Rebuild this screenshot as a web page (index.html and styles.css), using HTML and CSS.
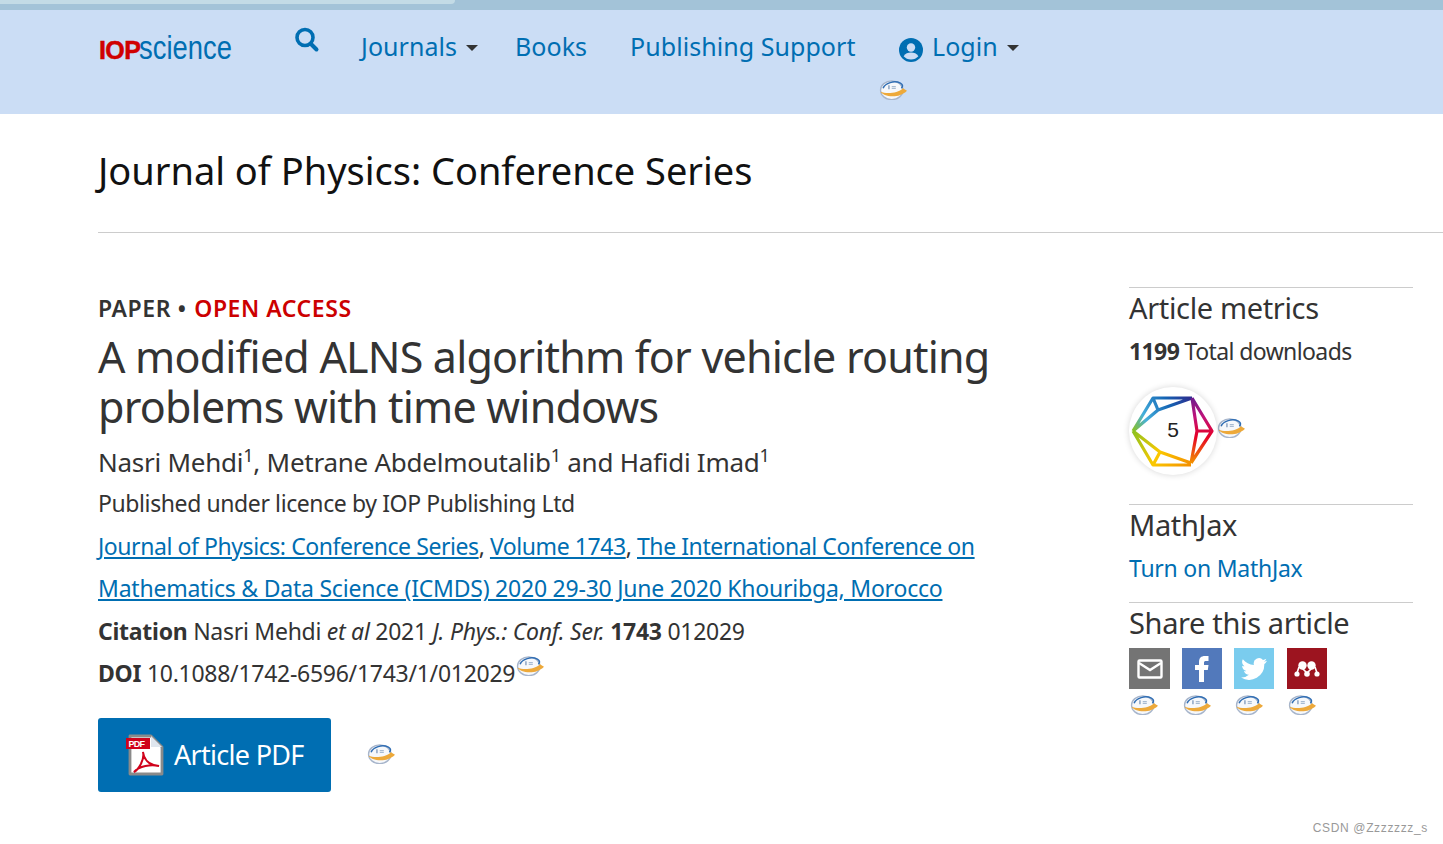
FILE: index.html
```html
<!DOCTYPE html>
<html lang="en">
<head>
    <meta charset="UTF-8">
    <meta name="viewport" content="width=device-width, initial-scale=1.0">
    <title>A modified ALNS algorithm for vehicle routing problems with time windows</title>
    <link rel="stylesheet" href="styles.css">
</head>
<body>
    <svg class="defs" width="0" height="0" aria-hidden="true">
        <symbol id="orb" viewBox="0 0 27.500 19.500">
            <ellipse cx="12.500" cy="10" rx="11" ry="9.200" fill="#f6f8fb" stroke="#a7b5cb" stroke-width="1.300"/>
            <path d="M4 8C6 3 15 0 21 3c2 1 3 3 1 5" fill="none" stroke="#2f6db3" stroke-width="1.500"/>
            <path d="M1.500 11.500c6 2.500 17 1.500 22-3.500l4 2.500c-4 4-9 5.500-14 5.500-6 0-10.500-2-12-4.500z" fill="#eda93a"/>
            <path d="M9 5h1.500v4H9zM12.500 6h4v1h-4zM12.500 8h4v.8h-4z" fill="#8fa6c4"/>
        </symbol>
    </svg>

    <div class="browser-strip"><div class="browser-tab"></div></div>

    <header class="site-header">
        <a class="logo" href="#"><span class="logo-iop">IOP</span><span class="logo-science">science</span></a>
        <nav class="main-nav">
            <a class="search-link" href="#" aria-label="Search">
                <svg width="26" height="26" viewBox="0 0 26 26"><circle cx="11" cy="10.500" r="8" fill="none" stroke="#006eb2" stroke-width="3.600"/><path d="M16.500 16.500l6 6" stroke="#006eb2" stroke-width="4" stroke-linecap="round"/></svg>
            </a>
            <a class="nav-link nav-drop" href="#">Journals<span class="caret"></span></a>
            <a class="nav-link" href="#">Books</a>
            <a class="nav-link" href="#">Publishing Support</a>
            <div class="login-wrap">
                <a class="nav-link" href="#">
                    <svg class="user-icon" width="24" height="24" viewBox="0 0 24 24"><circle cx="12" cy="12" r="12" fill="#006eb2"/><circle cx="12" cy="9.500" r="4.200" fill="#cbddf5"/><path d="M4.600 18.200c1.600-2.800 4.400-3.700 7.400-3.700s5.800.9 7.400 3.700c-1.800 2-4.400 3.300-7.400 3.300s-5.600-1.300-7.400-3.300z" fill="#cbddf5"/></svg>
                    Login<span class="caret"></span>
                </a>
                <svg class="orb orb-login"><use href="#orb"/></svg>
            </div>
        </nav>
    </header>

    <div class="journal-bar">
        <h2 class="journal-title">Journal of Physics: Conference Series</h2>
    </div>

    <main class="content">
        <article class="article">
            <div class="wd-label">PAPER <span class="dot">&bull;</span> <span class="open-access">OPEN ACCESS</span></div>
            <h1 class="article-title">A modified ALNS algorithm for vehicle routing problems with time windows</h1>
            <p class="authors">Nasri Mehdi<sup>1</sup>, Metrane Abdelmoutalib<sup>1</sup> and Hafidi Imad<sup>1</sup></p>
            <p class="meta">Published under licence by IOP Publishing Ltd</p>
            <p class="meta breadcrumbs"><a href="#">Journal of Physics: Conference Series</a>, <a href="#">Volume 1743</a>, <a href="#">The International Conference on</a></p>
            <p class="meta breadcrumbs-wide"><a href="#">Mathematics &amp; Data Science (ICMDS) 2020 29-30 June 2020 Khouribga, Morocco</a></p>
            <p class="meta citation"><b>Citation</b> Nasri Mehdi <i>et al</i> 2021 <i>J. Phys.: Conf. Ser.</i> <b>1743</b> 012029</p>
            <p class="meta citation"><b>DOI</b> 10.1088/1742-6596/1743/1/012029<svg class="orb orb-doi"><use href="#orb"/></svg></p>
            <div class="actions">
                <a class="btn-pdf" href="#">
                    <svg class="pdf-icon" width="38" height="42" viewBox="0 0 38 42">
                        <path d="M4 2h21l11 11v27H4z" fill="#fff" stroke="#8a8a8a" stroke-width="2.800" stroke-linejoin="round"/>
                        <path d="M25 2v11h11z" fill="#dfe6ee"/>
                        <rect x="0" y="4" width="24" height="11" fill="#d0021b"/>
                        <path d="M17 18c1 8 6 13 16 14-8-2-20 0-25 6 4-2 11-12 9-20z" fill="none" stroke="#d0021b" stroke-width="2"/>
                        <text x="2.500" y="12.800" class="pdf-text">PDF</text>
                    </svg>
                    Article PDF
                </a>
                <svg class="orb orb-pdf"><use href="#orb"/></svg>
            </div>
        </article>

        <aside class="sidebar">
            <section class="side-block metrics">
                <h3>Article metrics</h3>
                <p><b>1199</b> Total downloads</p>
                <div class="dimensions">
                    <div class="badge">
                        <svg width="88" height="88" viewBox="0 0 88 88">
                            <defs>
                                <linearGradient id="dim-a" gradientUnits="userSpaceOnUse" x1="4" y1="44" x2="63" y2="10">
                                    <stop offset="0" stop-color="#8dc21f"/>
                                    <stop offset="0.25" stop-color="#45b0dc"/>
                                    <stop offset="0.65" stop-color="#1464b4"/>
                                    <stop offset="1" stop-color="#2e2a8c"/>
                                </linearGradient>
                                <linearGradient id="dim-b" gradientUnits="userSpaceOnUse" x1="63" y1="10" x2="62" y2="76">
                                    <stop offset="0" stop-color="#6a1b8f"/>
                                    <stop offset="0.3" stop-color="#c0127a"/>
                                    <stop offset="0.6" stop-color="#e60026"/>
                                    <stop offset="1" stop-color="#f39000"/>
                                </linearGradient>
                                <linearGradient id="dim-c" gradientUnits="userSpaceOnUse" x1="4" y1="44" x2="62" y2="76">
                                    <stop offset="0" stop-color="#8dc21f"/>
                                    <stop offset="0.5" stop-color="#fbc800"/>
                                    <stop offset="1" stop-color="#f39000"/>
                                </linearGradient>
                            </defs>
                            <g fill="none" stroke-linejoin="round" stroke-width="3.200">
                                <path stroke="url(#dim-a)" d="M4 44L24 11H63M4 44L29 23 63 11M24 11L29 23"/>
                                <path stroke="url(#dim-b)" d="M63 11L83 44 62 76M63 11L68 44 62 76M68 44H83"/>
                                <path stroke="url(#dim-c)" d="M4 44L24 78H62M4 44L31 65 62 76M31 65L24 78"/>
                            </g>
                        </svg>
                        <span class="badge-num">5</span>
                    </div>
                    <svg class="orb orb-badge"><use href="#orb"/></svg>
                </div>
            </section>
            <section class="side-block mathjax">
                <h3>MathJax</h3>
                <p><a href="#">Turn on MathJax</a></p>
            </section>
            <section class="side-block share">
                <h3>Share this article</h3>
                <div class="share-row">
                    <div class="share-item">
                        <a class="share-btn mail" href="#" aria-label="Email"><svg width="26" height="20" viewBox="0 0 26 20"><rect x="1.500" y="1.500" width="23" height="17" rx="1" fill="none" stroke="#fff" stroke-width="2.400"/><path d="M2 4l11 7 11-7" fill="none" stroke="#fff" stroke-width="2.400"/></svg></a>
                        <svg class="orb"><use href="#orb"/></svg>
                    </div>
                    <div class="share-item">
                        <a class="share-btn fb" href="#" aria-label="Facebook"><svg width="14" height="26" viewBox="0 0 14 26"><path d="M4 26V14H0V9h4V6c0-4 2-6 6-6h3.500v5H11c-1.500 0-2 .6-2 2v2h4.500l-.7 5H9v12z" fill="#fff"/></svg></a>
                        <svg class="orb"><use href="#orb"/></svg>
                    </div>
                    <div class="share-item">
                        <a class="share-btn tw" href="#" aria-label="Twitter"><svg width="26" height="22" viewBox="0 0 24 20"><path d="M24 2.400c-.9.400-1.800.7-2.800.8 1-.6 1.800-1.600 2.200-2.700-1 .6-2 1-3.100 1.200A4.900 4.900 0 0 0 11.900 6.200C7.800 6 4.200 4 1.700.9.400 3.100 1 6 3.200 7.500c-.8 0-1.600-.2-2.200-.6 0 2.400 1.700 4.400 3.900 4.900-.7.200-1.500.2-2.200.1.600 2 2.400 3.400 4.600 3.400A9.900 9.900 0 0 1 0 17.800 14 14 0 0 0 21.500 5.400c1-.7 1.800-1.600 2.500-3z" fill="#fff"/></svg></a>
                        <svg class="orb"><use href="#orb"/></svg>
                    </div>
                    <div class="share-item">
                        <a class="share-btn mendeley" href="#" aria-label="Mendeley"><svg width="26" height="16" viewBox="0 0 26 16"><circle cx="3" cy="13" r="2.600" fill="#fff"/><circle cx="23" cy="13" r="2.600" fill="#fff"/><circle cx="13" cy="13" r="2.800" fill="#fff"/><circle cx="8.500" cy="4.500" r="4.200" fill="#fff"/><circle cx="17.500" cy="4.500" r="4.200" fill="#fff"/><path d="M5 6L3 12M21 6l2 6M8 7l5 5 5-5" fill="none" stroke="#fff" stroke-width="1.600"/></svg></a>
                        <svg class="orb"><use href="#orb"/></svg>
                    </div>
                </div>
            </section>
        </aside>
    </main>

    <div class="watermark">CSDN @Zzzzzzz_s</div>
</body>
</html>
```

FILE: styles.css
```css
body {
    margin: 0;
    font-family: "Noto Sans", "Open Sans", Arial, sans-serif;
    color: #333;
    background-color: #fff;
    height: 844px;
    overflow: hidden;
    position: relative;
}

a { color: #006eb2; text-decoration: none; }

.defs { position: absolute; }

.browser-strip {
    height: 10px;
    background-color: #a3c3d8;
}

.browser-tab {
    width: 455px;
    height: 4px;
    background-color: #c3dbe6;
    border-bottom-right-radius: 8px;
}

.site-header {
    height: 104px;
    background-color: #cbddf5;
    padding-left: 98px;
    display: flex;
    align-items: flex-start;
}

.logo {
    margin-top: 20px;
    width: 196px;
    display: flex;
    align-items: baseline;
    font-family: "Liberation Sans", Arial, sans-serif;
    font-size: 33px;
    line-height: 36px;
}

.logo-iop {
    color: #d00000;
    font-weight: bold;
    font-size: 25px;
    letter-spacing: -0.6px;
    margin-left: 1px;
    margin-right: -1px;
    -webkit-text-stroke: 0.5px #d00000;
}

.logo-science {
    color: #006eb2;
    transform: scaleX(0.83);
    transform-origin: left;
}

.main-nav {
    display: flex;
    align-items: flex-start;
    gap: 43px;
    font-size: 25px;
    line-height: 34px;
    margin-top: 19px;
}

.search-link { margin-right: -2px; margin-top: -3px; }

.nav-link { white-space: nowrap; letter-spacing: 0.05px; display: block; }

.nav-drop { margin-right: -6px; }

.caret {
    display: inline-block;
    margin-left: 9px;
    vertical-align: 5px;
    border-top: 6px solid #333;
    border-left: 6px solid transparent;
    border-right: 6px solid transparent;
}

.user-icon { vertical-align: -6px; margin-left: 1px; margin-right: 2px; }

.login-wrap { position: relative; }

.orb { width: 28px; height: 20px; display: block; }

.orb-login { position: absolute; left: -19px; top: 51px; }

.journal-bar {
    margin-left: 98px;
    height: 118px;
    border-bottom: 1px solid #ccc;
}

.journal-title {
    margin: 0;
    padding-top: 31px;
    font-weight: 400;
    font-size: 38px;
    line-height: 50px;
    color: #111;
    letter-spacing: -0.02px;
}

.content {
    display: flex;
    padding-left: 98px;
    padding-top: 54px;
}

.article { width: 1031px; flex-shrink: 0; }

.wd-label {
    font-size: 23px;
    line-height: 30px;
    font-weight: 600;
    margin-top: 6px;
    letter-spacing: 0.55px;
}

.open-access { color: #c00; margin-left: 1px; }
.dot { color: #333; }

.article-title {
    margin: 9px 0 0;
    width: 920px;
    font-weight: 400;
    font-size: 43px;
    line-height: 50px;
    letter-spacing: -0.8px;
}

.authors {
    margin: 12px 0 2px;
    font-size: 26px;
    line-height: 36px;
    letter-spacing: -0.25px;
}

.authors sup { font-size: 18px; line-height: 0; }

.meta {
    margin: 0;
    width: 900px;
    font-size: 23px;
    line-height: 42.500px;
    letter-spacing: -0.4px;
}

.breadcrumbs { letter-spacing: -0.43px; }
.breadcrumbs-wide { letter-spacing: -0.22px; }
.breadcrumbs a, .breadcrumbs-wide a { text-decoration: underline; }

.citation { letter-spacing: -0.27px; }

.orb-doi { display: inline-block; vertical-align: 6px; margin-left: 1px; }

.actions {
    display: flex;
    align-items: center;
    margin-top: 23px;
}

.btn-pdf {
    display: flex;
    align-items: center;
    gap: 10px;
    width: 233px;
    height: 74px;
    box-sizing: border-box;
    padding-left: 28px;
    background-color: #006eb2;
    color: #fff;
    border-radius: 3px;
    font-size: 27px;
    letter-spacing: -0.7px;
}

.pdf-icon { flex-shrink: 0; }

.pdf-text { font: bold 9px "Liberation Sans", Arial, sans-serif; fill: #fff; }

.orb-pdf { margin-left: 36px; margin-top: -2px; }

.sidebar { width: 284px; margin-top: 0; }

.side-block { border-top: 1px solid #ccc; }

.side-block h3 {
    margin: 0;
    padding-bottom: 1px;
    font-weight: 400;
    font-size: 29px;
    line-height: 40px;
    letter-spacing: -0.35px;
}

.side-block p {
    margin: 0;
    font-size: 23px;
    line-height: 44px;
    letter-spacing: -0.6px;
}

.mathjax p { letter-spacing: -0.25px; }

.metrics { height: 216px; }
.mathjax { height: 97px; }

.dimensions {
    display: flex;
    align-items: center;
    margin-top: 14px;
}

.badge {
    width: 88px;
    height: 88px;
    border-radius: 50%;
    background-color: #fff;
    box-shadow: 0 0 6px rgba(0, 0, 0, 0.16);
    position: relative;
}

.badge-num {
    position: absolute;
    left: 0;
    right: 0;
    top: 29px;
    text-align: center;
    font: 21px/28px "Liberation Sans", Arial, sans-serif;
    color: #222;
}

.orb-badge { margin-top: -6px; }

.share-row {
    display: flex;
    gap: 12.500px;
    margin-top: 4px;
}

.share-item { width: 40px; }

.share-item .orb { margin: 6px 0 0 1px; }

.share-btn {
    width: 40px;
    height: 41px;
    display: flex;
    align-items: center;
    justify-content: center;
}

.mail { background-color: #747474; width: 41px; }
.fb { background-color: #5279bb; }
.tw { background-color: #7accee; }
.mendeley { background-color: #9c141f; }

.watermark {
    position: absolute;
    right: 15px;
    bottom: 8px;
    font: 12px/16px "Liberation Sans", Arial, sans-serif;
    color: #999;
    letter-spacing: 0.65px;
}
```
